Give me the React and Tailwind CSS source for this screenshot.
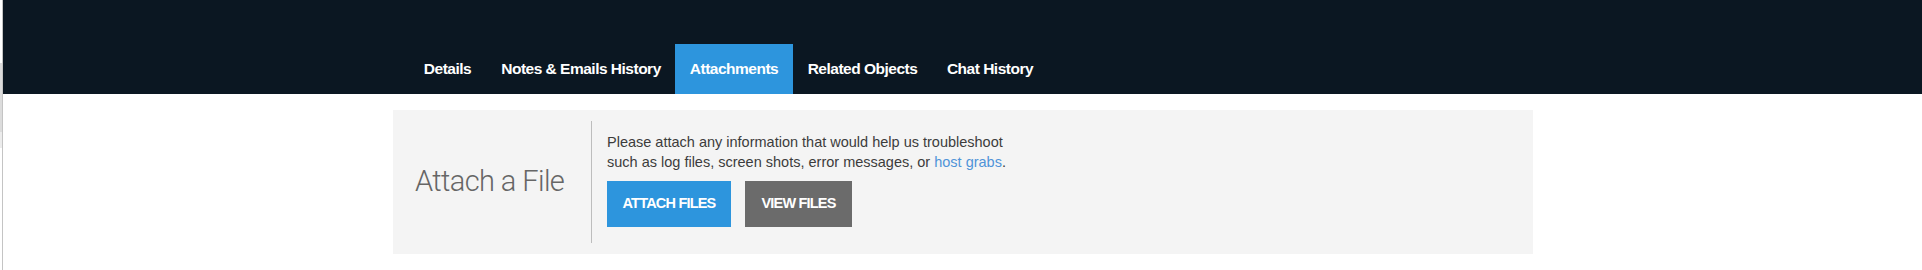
import React, { useState } from 'react'

const tabs = [
  { id: 'details', label: 'Details', width: 'w-[79px]' },
  { id: 'notes', label: 'Notes & Emails History', width: 'w-[188px]' },
  { id: 'attachments', label: 'Attachments', width: 'w-[118px]' },
  { id: 'related', label: 'Related Objects', width: 'w-[139px]' },
  { id: 'chat', label: 'Chat History', width: 'w-[116px]' },
]

const sans = { fontFamily: '"Liberation Sans", Arial, sans-serif' }

export default function App() {
  const [active, setActive] = useState('attachments')

  return (
    <div className="flex w-[1922px] h-[270px] bg-white overflow-hidden" style={sans}>
      {/* window edge */}
      <div className="flex flex-col w-[2px]">
        <div className="h-[63px] bg-white" />
        <div className="h-[69px] bg-[#dcdcdc]" />
        <div className="h-[16px] bg-[#ececec]" />
        <div className="flex-1 bg-white" />
      </div>
      <div className="w-px bg-[#c4c4c4]" />

      <div className="flex-1 flex flex-col">
        {/* Header */}
        <div className="h-[94px] bg-[#0b1722] flex items-end">
          <nav className="ml-[390px] pl-[15px] flex">
            {tabs.map((tab) => (
              <button
                key={tab.id}
                onClick={() => setActive(tab.id)}
                className={`${tab.width} h-[50px] flex items-center justify-center text-[15.5px] font-bold tracking-[-0.5px] text-white whitespace-nowrap ${
                  active === tab.id ? 'bg-[#2d95dd]' : 'bg-transparent'
                }`}
              >
                {tab.label}
              </button>
            ))}
          </nav>
        </div>

        {/* Attach panel */}
        <div className="mt-4 ml-[390px] w-[1140px] h-[144px] bg-[#f4f4f4] flex py-[11px]">
          <div className="w-[198px] flex items-center pl-[22px]">
            <h2
              className="text-[29px] font-light tracking-[-0.6px] text-[#666666] whitespace-nowrap"
              style={{ fontFamily: 'Roboto, "Liberation Sans", sans-serif' }}
            >
              Attach a File
            </h2>
          </div>
          <div className="border-l border-[#bdbdbd] pl-[15px] pt-[11px]">
            <p className="text-[14.5px] leading-5 text-[#3c3c3c]">
              Please attach any information that would help us troubleshoot
              <br />
              such as log files, screen shots, error messages, or{' '}
              <a href="#" className="text-[#4f93d8]">host grabs</a>.
            </p>
            <div className="flex gap-[14px] mt-[9px]">
              <button className="w-[124px] h-[46px] bg-[#2d95dd] text-white text-[14.5px] font-bold tracking-[-0.8px]">
                ATTACH FILES
              </button>
              <button className="w-[107px] h-[46px] bg-[#6b6b6b] text-white text-[14.5px] font-bold tracking-[-0.8px]">
                VIEW FILES
              </button>
            </div>
          </div>
        </div>
      </div>
    </div>
  )
}
